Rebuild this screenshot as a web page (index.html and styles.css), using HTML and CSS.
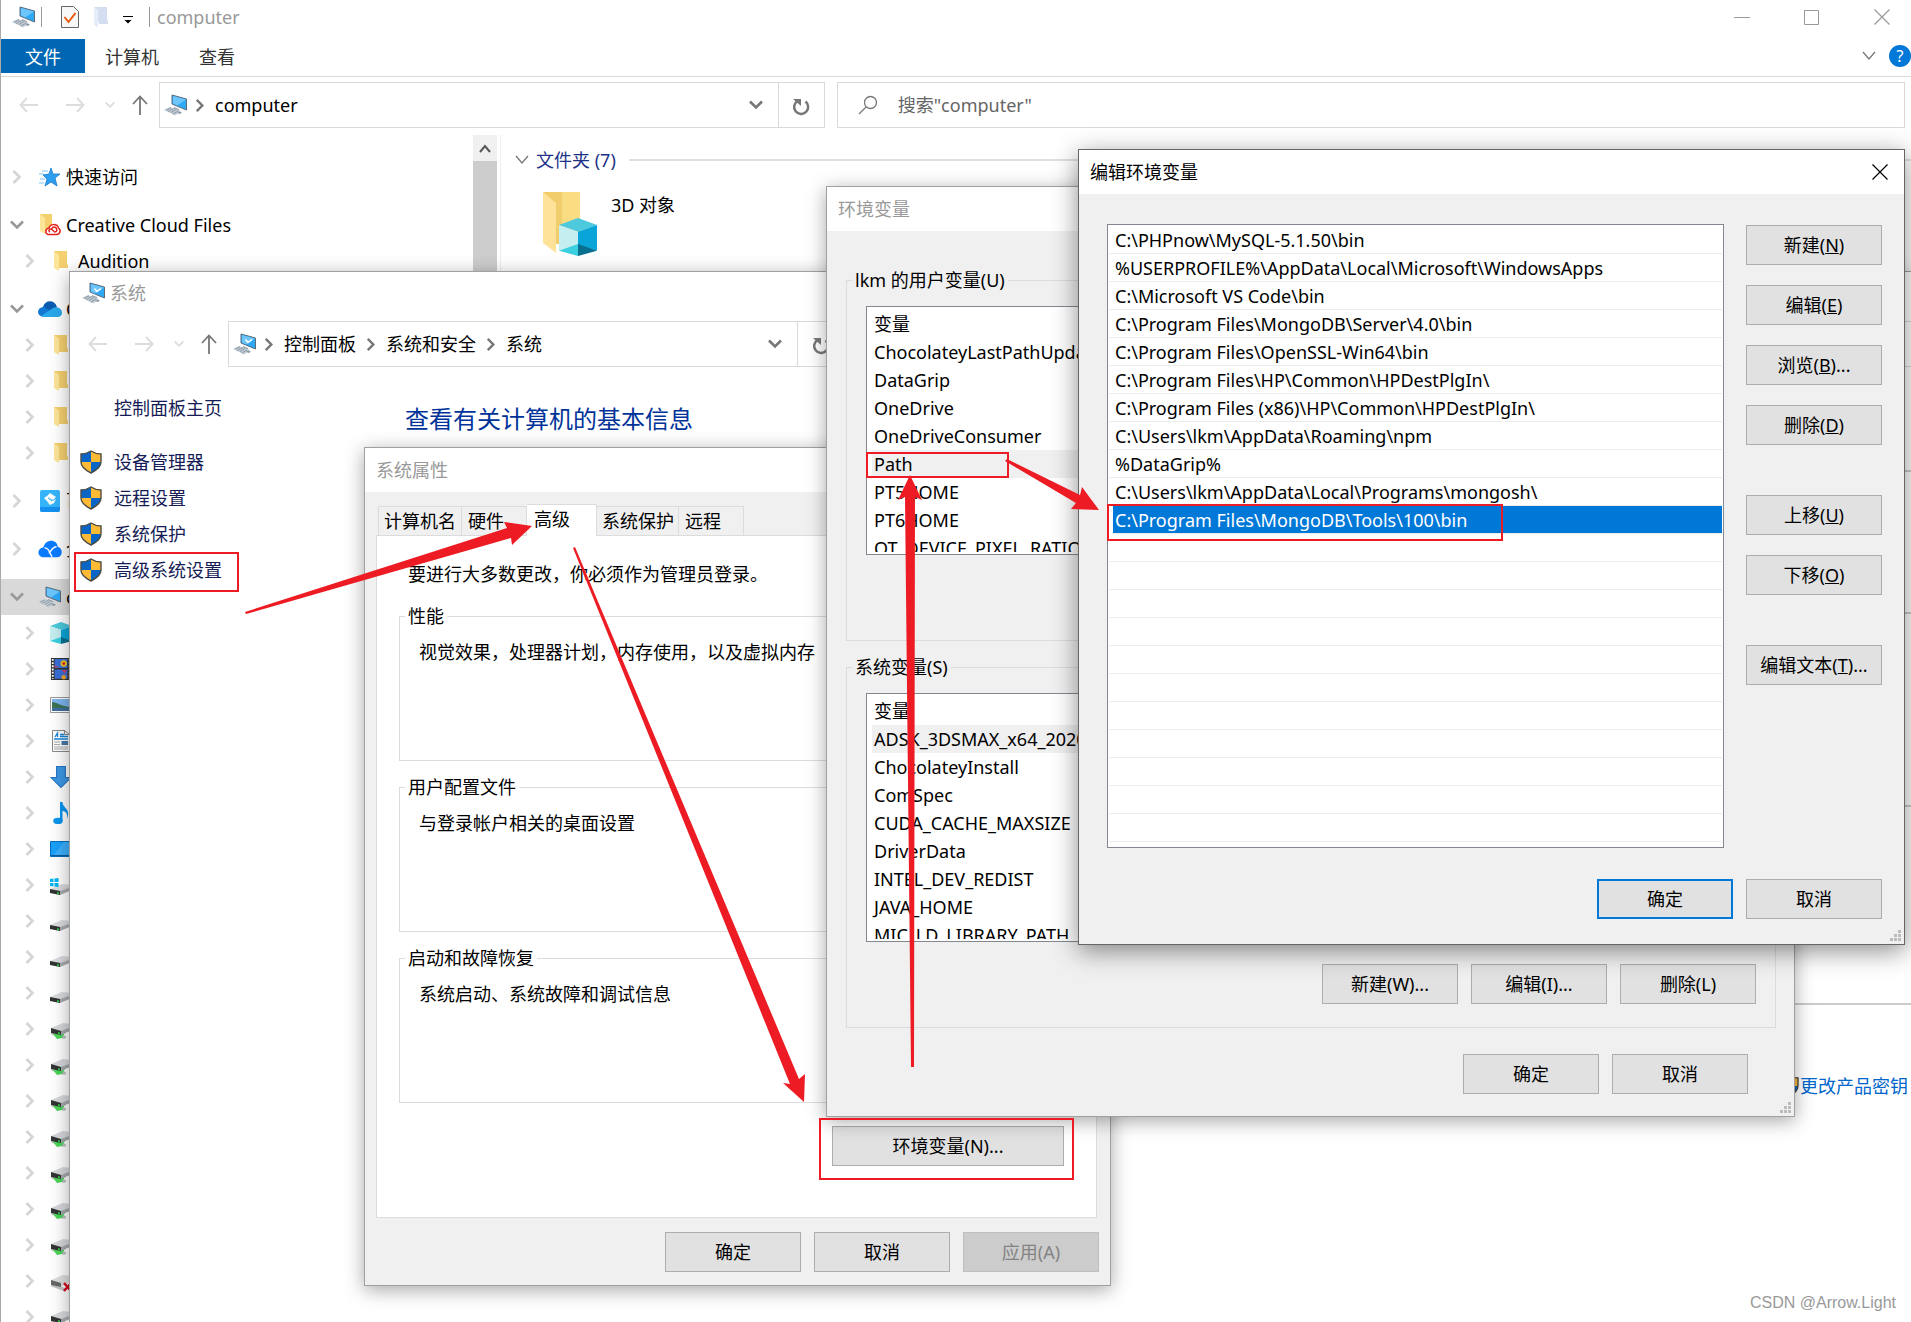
FILE: index.html
```html
<!DOCTYPE html>
<html lang="zh-CN">
<head>
    <meta charset="UTF-8">
    <meta name="viewport" content="width=device-width, initial-scale=1.0">
    <title>computer</title>
    <link rel="stylesheet" href="styles.css">
</head>
<body>
    <!-- Icons -->
    <svg class="sprite" aria-hidden="true">
        <symbol id="i-pc" viewBox="0 0 24 22">
            <path d="M8 1l14.500 4v11L8 10z" fill="#2fa8f6" stroke="#5b6b78" stroke-width="1"/>
            <path d="M9 2l13 3.500-9 6L9 9.500z" fill="#6cc6fb"/>
            <path d="M10 13l5 2v2l-5-1z" fill="#9aa5ae"/>
            <path d="M0 16l6-3 11 4-6 4.500z" fill="#c3ccd4"/>
            <path d="M2 16l5-2M4 17.500l6-3M7 18.500l5-3M9 20l5-3" stroke="#7e8d9a" stroke-width=".8"/>
            <path d="M15 17.500l3 1-2 1.500-3-1z" fill="#8f9ca8"/>
        </symbol>
        <symbol id="i-pccheck" viewBox="0 0 24 22">
            <use href="#i-pc" width="24" height="22"/>
            <path d="M12.500 6.500l2.500 3 4-3" fill="none" stroke="#fff" stroke-width="1.500"/>
        </symbol>
        <symbol id="i-folder" viewBox="0 0 16 22">
            <path d="M1 1h13v13l1 1v3H6z" fill="#f4d06f"/>
            <path d="M1 1l5 4v16l-5-3z" fill="#fde59a"/>
        </symbol>
        <symbol id="i-folderblue" viewBox="0 0 16 22">
            <path d="M1 1h13v13l1 1v3H6z" fill="#d3dff1"/>
            <path d="M1 1l4 3v18l-4-3z" fill="#e6eefa"/>
        </symbol>
        <symbol id="i-cc" viewBox="0 0 22 22">
            <path d="M1 0h12v14l-6 5z" fill="#f4d06f"/>
            <path d="M1 0l5 4v16l-5-3z" fill="#fde59a"/>
            <path d="M9 20.500c-3-1-3-6 1-6.500 1-4 8-5 9.500 0 3 2 1.500 6.500-2 6.500z" fill="#fff" stroke="#e2231a" stroke-width="1.500"/>
            <path d="M11 18c-2-1-1-3 1-3 1 0 3 3 4 3 3 0 2-5-1-5-1 0-2 1-3 2" fill="none" stroke="#e2231a" stroke-width="1.500"/>
        </symbol>
        <symbol id="i-star" viewBox="0 0 22 22">
            <path d="M12 2l2 6h7l-5 4 2 8-6-4-6 4 2-7-4-4 6-1z" fill="#2d9ff0" stroke="#1b79cc" stroke-width=".8"/>
            <path d="M3 5h6M0 8h5M1 13h5M0 17h5" stroke="#7cc4f5" stroke-width="1.200"/>
        </symbol>
        <symbol id="i-onedrive" viewBox="0 0 24 16">
            <path d="M5 6c2-7 11-8 14 0l-7 6z" fill="#0a5bb0"/>
            <path d="M4 15.500C-2 14-1 6 6 6l12 7z" fill="#1478d2"/>
            <path d="M3 15l12-8c5-2 9 1 9 5 0 2-2 4-4 4H5z" fill="#28a8ea"/>
        </symbol>
        <symbol id="i-baidu" viewBox="0 0 20 22">
            <rect width="20" height="22" rx="2" fill="#35b4fb"/>
            <path d="M0 17h20v3q0 2-2 2H2q-2 0-2-2z" fill="#1590ef"/>
            <path d="M10 3l6 4-3 3-6-4zM4 8l3-2 6 5-3 3zM7 12l3 2 3-3 3-2-2 4-4 2z" fill="#fff"/>
            <path d="M8 8l4 3" stroke="#35b4fb"/>
        </symbol>
        <symbol id="i-cloud" viewBox="0 0 22 16">
            <path d="M4 15.500c-5-1-5-8 1-9C7-2 18-1 18 6c5 1 5 9 0 9.500z" fill="#0a7bff"/>
            <path d="M6 7c5 0 4 5 7 8M17 6c-4 0-5 4-7 6" fill="none" stroke="#fff" stroke-width="1.300"/>
        </symbol>
        <symbol id="i-cube" viewBox="0 0 22 22">
            <path d="M11 0l11 4-11 4L0 4z" fill="#4cc9dc"/>
            <path d="M0 4l11 4v8L0 19z" fill="#c4eef0"/>
            <path d="M22 4l-11 4v8l11 3z" fill="#0aa5d8"/>
            <path d="M0 19l11-4v7z" fill="#3ad0df"/>
            <path d="M22 19l-11-4v7z" fill="#08708f"/>
        </symbol>
        <symbol id="i-film" viewBox="0 0 22 24">
            <rect width="22" height="24" fill="#333"/>
            <path d="M2 1v22M20.500 1v22" stroke="#fff" stroke-width="2" stroke-dasharray="2 1.500"/>
            <path d="M4 1h14v10H4zM4 12.500h14v10H4z" fill="#3a6fd8"/>
            <circle cx="14" cy="6" r="3.500" fill="#f0c52a"/>
            <circle cx="14" cy="6" r="1.500" fill="#c22"/>
            <path d="M4 8l5 2H4zM12 13h5l-2 4z" fill="#d8356a"/>
            <circle cx="14" cy="21" r="2.500" fill="#f0a52a"/>
        </symbol>
        <symbol id="i-image" viewBox="0 0 22 16">
            <path d="M.5.500h21v15H.5z" fill="#fff" stroke="#999"/>
            <path d="M2 2h18v12H2z" fill="#7db4ee"/>
            <path d="M2 5c5 0 8 4 18 5v1H2z" fill="#3d7355"/>
            <path d="M2 11h18v3H2z" fill="#3f6f9f"/>
        </symbol>
        <symbol id="i-doc" viewBox="0 0 18 22">
            <path d="M.5.500h12l5 4v17H.5z" fill="#fff" stroke="#888"/>
            <path d="M12.500.500v4h5" fill="none" stroke="#888"/>
            <path d="M3 7l2.500-4v4M8 4.500h4M8 6.500h8M2 9h14" fill="none" stroke="#1a86d9" stroke-width="1.300"/>
            <path d="M2 12h6M2 14.500h6M2 17h14M2 19h14" stroke="#aaa"/>
            <path d="M9.500 11H16v4H9.500z" fill="#4a7aa8"/>
        </symbol>
        <symbol id="i-down" viewBox="0 0 20 20">
            <path d="M6 .5h8v10h5l-9 9-9-9h5z" fill="#3d97e4" stroke="#2473c0"/>
        </symbol>
        <symbol id="i-note" viewBox="0 0 16 22">
            <ellipse cx="5" cy="19" rx="4.800" ry="3.200" fill="#0a96ee"/>
            <path d="M7 19V0h2.500c0 6 9 7 4.500 17 1-6-2-8-4.500-8v10z" fill="#0a96ee"/>
        </symbol>
        <symbol id="i-desktop" viewBox="0 0 22 16">
            <path d="M.5.500h21v15H.5z" fill="#1aa0fa" stroke="#0a6cb8"/>
            <path d="M4 14L14 1h7v13z" fill="#3cb0fc"/>
            <path d="M1 14.500h20" stroke="#0a5a9c"/>
        </symbol>
        <symbol id="i-drive" viewBox="0 0 22 20">
            <path d="M0 14l12-5 10 1v4l-12 6z" fill="#d9dbde"/>
            <path d="M10 16l12-4v3l-12 5z" fill="#a9acb0"/>
            <path d="M0 14l10 2v4L0 18z" fill="#2f3331"/>
            <path d="M7 17l2 .5v2l-2-.5z" fill="#35c04a"/>
        </symbol>
        <symbol id="i-windrive" viewBox="0 0 22 20">
            <use href="#i-drive" width="22" height="20"/>
            <path d="M0 4l3.500-.5V7H0zM4.500 3.500l4-.5v4h-4zM0 8h3.500v3.500L0 11zM4.500 8h4v4l-4-.5z" fill="#00b4f0"/>
        </symbol>
        <symbol id="i-netdrive" viewBox="0 0 22 20">
            <path d="M0 15l14 5 2-1v-2L3 14z" fill="#bfc2c5"/>
            <path d="M3 15l12-1-3 5-5 1z" fill="#4bd45a"/>
            <path d="M1 9l12-5 9 1v5l-11 6z" fill="#d5d7da"/>
            <path d="M11 12l11-4v3l-11 5z" fill="#a4a7ab"/>
            <path d="M1 9l10 3v4L1 14z" fill="#2f3331"/>
            <path d="M8 13l2 .5v2L8 15z" fill="#35c04a"/>
        </symbol>
        <symbol id="i-offdrive" viewBox="0 0 22 20">
            <path d="M0 15l14 5 2-1v-2L3 14z" fill="#bfc2c5"/>
            <path d="M1 9l12-5 9 1v5l-11 6z" fill="#dcdddf"/>
            <path d="M1 9l10 3v4L1 14z" fill="#666"/>
            <path d="M14 12l7 8M21 12l-7 8" stroke="#d4081b" stroke-width="2.500"/>
        </symbol>
        <symbol id="i-shield" viewBox="0 0 22 24">
            <path d="M11 1c3 2 6 3 10 3v8c0 6-6 9-10 11C7 21 1 18 1 12V4c4 0 7-1 10-3z" fill="#fdbb35"/>
            <path d="M11 1v11H1V4c4 0 7-1 10-3zM11 12h10c0 6-6 9-10 11z" fill="#0a66c6"/>
            <path d="M11 1c3 2 6 3 10 3v8c0 6-6 9-10 11C7 21 1 18 1 12V4c4 0 7-1 10-3z" fill="none" stroke="#4c4c44" stroke-width="1.400"/>
        </symbol>
        <symbol id="i-right" viewBox="0 0 10 14"><path d="M1.500 1l6 6-6 6" fill="none" stroke="currentColor" stroke-width="2.600"/></symbol>
        <symbol id="i-chevdown" viewBox="0 0 14 10"><path d="M1 1.500l6 6 6-6" fill="none" stroke="currentColor" stroke-width="2.600"/></symbol>
        <symbol id="i-thin" viewBox="0 0 14 10"><path d="M1 1l6 7 6-7" fill="none" stroke="currentColor" stroke-width="1.300"/></symbol>
        <symbol id="i-back" viewBox="0 0 20 16"><path d="M19 8H2M8 1L1.500 8 8 15" fill="none" stroke="currentColor" stroke-width="2"/></symbol>
        <symbol id="i-fwd" viewBox="0 0 20 16"><path d="M1 8h17M12 1l6.500 7-6.500 7" fill="none" stroke="currentColor" stroke-width="2"/></symbol>
        <symbol id="i-up" viewBox="0 0 16 20"><path d="M8 20V2M1 9l7-7.500L15 9" fill="none" stroke="currentColor" stroke-width="1.800"/></symbol>
        <symbol id="i-refresh" viewBox="0 0 18 18"><path d="M13.500 3.500a7 7 0 1 1-8-.5" fill="none" stroke="currentColor" stroke-width="2.500"/><path d="M1 1h8v7z" fill="currentColor"/></symbol>
        <symbol id="i-search" viewBox="0 0 20 20"><circle cx="12.500" cy="7.500" r="6" fill="none" stroke="currentColor" stroke-width="1.300"/><path d="M8 12l-7 7" stroke="currentColor" stroke-width="1.300"/></symbol>
        <symbol id="i-close" viewBox="0 0 16 16"><path d="M.5.500l15 15M15.500.500l-15 15" stroke="currentColor" stroke-width="1.200"/></symbol>
        <symbol id="i-grip" viewBox="0 0 12 12"><path d="M8 0h3v3H8zM4 4h3v3H4zM8 4h3v3H8zM0 8h3v3H0zM4 8h3v3H4zM8 8h3v3H8z" fill="#bcbcbc"/></symbol>
    </svg>

    <main class="explorer">
        <header class="caption">
            <svg class="ic-24"><use href="#i-pc"/></svg>
            <i class="sep"></i>
            <svg class="ic-doc" viewBox="0 0 18 22"><path d="M.5.500h12l5 5v16H.5z" fill="#f7f7f7" stroke="#666"/><path d="M3.500 11l4 5 7-9" fill="none" stroke="#e8590c" stroke-width="2"/></svg>
            <svg class="ic-16"><use href="#i-folderblue"/></svg>
            <svg class="ic-more" viewBox="0 0 10 8"><path d="M0 .5h10" stroke="#000"/><path d="M1.500 4h7L5 7.500z"/></svg>
            <i class="sep"></i>
            <span class="caption-text">computer</span>
            <div class="win-buttons">
                <button aria-label="最小化"><svg viewBox="0 0 16 16"><path d="M0 8.500h16" stroke="currentColor"/></svg></button>
                <button aria-label="最大化"><svg viewBox="0 0 16 16"><path d="M.5 1.500h14v14H.5z" fill="none" stroke="currentColor"/></svg></button>
                <button aria-label="关闭"><svg><use href="#i-close"/></svg></button>
            </div>
        </header>

        <nav class="ribbon">
            <button class="ribbon-file">文件</button>
            <button>计算机</button>
            <button>查看</button>
            <span class="ribbon-end">
                <svg class="ic-thin"><use href="#i-thin"/></svg>
                <button class="help" aria-label="帮助">?</button>
            </span>
        </nav>

        <div class="navbar">
            <div class="nav-buttons">
                <svg class="ic-arrow"><use href="#i-back"/></svg>
                <svg class="ic-arrow"><use href="#i-fwd"/></svg>
                <svg class="ic-small"><use href="#i-chevdown"/></svg>
                <svg class="ic-up"><use href="#i-up"/></svg>
            </div>
            <div class="address">
                <svg class="ic-24"><use href="#i-pc"/></svg>
                <svg class="crumb-arrow"><use href="#i-right"/></svg>
                <span>computer</span>
                <svg class="ic-drop"><use href="#i-chevdown"/></svg>
                <button class="refresh" aria-label="刷新"><svg><use href="#i-refresh"/></svg></button>
            </div>
            <label class="search">
                <svg><use href="#i-search"/></svg>
                <input type="text" aria-label="搜索" placeholder="搜索&quot;computer&quot;">
            </label>
        </div>

        <div class="explorer-body">
            <ul class="tree">
                <li class="top"><svg class="tw"><use href="#i-right"/></svg><svg class="ti"><use href="#i-star"/></svg>快速访问</li>
                <li class="top open"><svg class="tw"><use href="#i-chevdown"/></svg><svg class="ti"><use href="#i-cc"/></svg>Creative Cloud Files</li>
                <li><svg class="tw"><use href="#i-right"/></svg><svg class="ti"><use href="#i-folder"/></svg>Audition</li>
                <li class="top open"><svg class="tw"><use href="#i-chevdown"/></svg><svg class="ti"><use href="#i-onedrive"/></svg>OneDrive</li>
                <li><svg class="tw"><use href="#i-right"/></svg><svg class="ti"><use href="#i-folder"/></svg></li>
                <li><svg class="tw"><use href="#i-right"/></svg><svg class="ti"><use href="#i-folder"/></svg></li>
                <li><svg class="tw"><use href="#i-right"/></svg><svg class="ti"><use href="#i-folder"/></svg></li>
                <li><svg class="tw"><use href="#i-right"/></svg><svg class="ti"><use href="#i-folder"/></svg></li>
                <li class="top"><svg class="tw"><use href="#i-right"/></svg><svg class="ti"><use href="#i-baidu"/></svg>百度网盘</li>
                <li class="top"><svg class="tw"><use href="#i-right"/></svg><svg class="ti"><use href="#i-cloud"/></svg>企业云盘</li>
                <li class="top open current"><svg class="tw"><use href="#i-chevdown"/></svg><svg class="ti"><use href="#i-pc"/></svg>computer</li>
                <li><svg class="tw"><use href="#i-right"/></svg><svg class="ti"><use href="#i-cube"/></svg></li>
                <li><svg class="tw"><use href="#i-right"/></svg><svg class="ti"><use href="#i-film"/></svg></li>
                <li><svg class="tw"><use href="#i-right"/></svg><svg class="ti"><use href="#i-image"/></svg></li>
                <li><svg class="tw"><use href="#i-right"/></svg><svg class="ti"><use href="#i-doc"/></svg></li>
                <li><svg class="tw"><use href="#i-right"/></svg><svg class="ti"><use href="#i-down"/></svg></li>
                <li><svg class="tw"><use href="#i-right"/></svg><svg class="ti"><use href="#i-note"/></svg></li>
                <li><svg class="tw"><use href="#i-right"/></svg><svg class="ti"><use href="#i-desktop"/></svg></li>
                <li><svg class="tw"><use href="#i-right"/></svg><svg class="ti"><use href="#i-windrive"/></svg></li>
                <li><svg class="tw"><use href="#i-right"/></svg><svg class="ti"><use href="#i-drive"/></svg></li>
                <li><svg class="tw"><use href="#i-right"/></svg><svg class="ti"><use href="#i-drive"/></svg></li>
                <li><svg class="tw"><use href="#i-right"/></svg><svg class="ti"><use href="#i-drive"/></svg></li>
                <li><svg class="tw"><use href="#i-right"/></svg><svg class="ti"><use href="#i-netdrive"/></svg></li>
                <li><svg class="tw"><use href="#i-right"/></svg><svg class="ti"><use href="#i-netdrive"/></svg></li>
                <li><svg class="tw"><use href="#i-right"/></svg><svg class="ti"><use href="#i-netdrive"/></svg></li>
                <li><svg class="tw"><use href="#i-right"/></svg><svg class="ti"><use href="#i-netdrive"/></svg></li>
                <li><svg class="tw"><use href="#i-right"/></svg><svg class="ti"><use href="#i-netdrive"/></svg></li>
                <li><svg class="tw"><use href="#i-right"/></svg><svg class="ti"><use href="#i-netdrive"/></svg></li>
                <li><svg class="tw"><use href="#i-right"/></svg><svg class="ti"><use href="#i-netdrive"/></svg></li>
                <li><svg class="tw"><use href="#i-right"/></svg><svg class="ti"><use href="#i-offdrive"/></svg></li>
                <li><svg class="tw"><use href="#i-right"/></svg><svg class="ti"><use href="#i-netdrive"/></svg></li>
            </ul>
            <div class="scrollbar"><svg viewBox="0 0 24 26"><path d="M7 17l5-6 5 6" fill="none" stroke="#555" stroke-width="2"/></svg></div>
            <section class="files">
                <h2><svg class="ic-thin"><use href="#i-thin"/></svg>文件夹 (7)</h2>
                <div class="file">
                    <svg viewBox="0 0 56 64">
                        <path d="M1 0h37v52H14z" fill="#f2cd6b"/>
                        <path d="M20 0h18v40l-18 8z" fill="#fadc82"/>
                        <path d="M1 0l13 11v50L1 51z" fill="#fee29a"/>
                        <use href="#i-cube" x="17" y="26" width="38" height="38"/>
                    </svg>
                    <span>3D 对象</span>
                </div>
            </section>
        </div>
    </main>

    <section class="window system">
        <header class="sys-title"><svg class="ic-24"><use href="#i-pccheck"/></svg>系统</header>
        <div class="navbar">
            <div class="nav-buttons">
                <svg class="ic-arrow"><use href="#i-back"/></svg>
                <svg class="ic-arrow"><use href="#i-fwd"/></svg>
                <svg class="ic-small"><use href="#i-chevdown"/></svg>
                <svg class="ic-up"><use href="#i-up"/></svg>
            </div>
            <div class="address">
                <svg class="ic-24"><use href="#i-pccheck"/></svg>
                <svg class="crumb-arrow"><use href="#i-right"/></svg>
                <span>控制面板</span>
                <svg class="crumb-arrow"><use href="#i-right"/></svg>
                <span>系统和安全</span>
                <svg class="crumb-arrow"><use href="#i-right"/></svg>
                <span>系统</span>
                <svg class="ic-drop"><use href="#i-chevdown"/></svg>
                <button class="refresh" aria-label="刷新"><svg><use href="#i-refresh"/></svg></button>
            </div>
            <div class="search"></div>
        </div>
        <div class="sys-body">
            <nav class="sys-links">
                <a href="#" class="home">控制面板主页</a>
                <a href="#"><svg><use href="#i-shield"/></svg>设备管理器</a>
                <a href="#"><svg><use href="#i-shield"/></svg>远程设置</a>
                <a href="#"><svg><use href="#i-shield"/></svg>系统保护</a>
                <a href="#"><svg><use href="#i-shield"/></svg>高级系统设置</a>
            </nav>
            <div class="sys-info">
                <h1>查看有关计算机的基本信息</h1>
                <div class="block edition"></div>
                <div class="block specs"></div>
                <div class="block names"></div>
                <div class="block activation">
                    <a href="#"><svg><use href="#i-shield"/></svg>更改产品密钥</a>
                </div>
            </div>
        </div>
    </section>

    <section class="window props">
        <header class="dlg-title">系统属性</header>
        <div class="tabs">
            <button>计算机名</button>
            <button>硬件</button>
            <button class="active">高级</button>
            <button>系统保护</button>
            <button>远程</button>
        </div>
        <div class="tab-page">
            <p>要进行大多数更改，你必须作为管理员登录。</p>
            <fieldset>
                <legend>性能</legend>
                视觉效果，处理器计划，内存使用，以及虚拟内存
            </fieldset>
            <fieldset>
                <legend>用户配置文件</legend>
                与登录帐户相关的桌面设置
            </fieldset>
            <fieldset>
                <legend>启动和故障恢复</legend>
                系统启动、系统故障和调试信息
            </fieldset>
            <button class="btn env">环境变量(N)...</button>
        </div>
        <footer class="actions">
            <button class="btn">确定</button>
            <button class="btn">取消</button>
            <button class="btn" disabled>应用(A)</button>
        </footer>
    </section>

    <section class="window vars">
        <header class="dlg-title">环境变量</header>
        <div class="vars-body">
            <fieldset>
                <legend>lkm 的用户变量(U)</legend>
                <div class="var-list">
                    <div class="clip">
                        <table>
                            <thead><tr><th>变量</th></tr></thead>
                            <tbody>
                                <tr><td>ChocolateyLastPathUpdate</td></tr>
                                <tr><td>DataGrip</td></tr>
                                <tr><td>OneDrive</td></tr>
                                <tr><td>OneDriveConsumer</td></tr>
                                <tr class="selected"><td>Path</td></tr>
                                <tr><td>PT5HOME</td></tr>
                                <tr><td>PT6HOME</td></tr>
                                <tr><td>QT_DEVICE_PIXEL_RATIO</td></tr>
                            </tbody>
                        </table>
                    </div>
                </div>
            </fieldset>
            <fieldset>
                <legend>系统变量(S)</legend>
                <div class="var-list">
                    <div class="clip">
                        <table>
                            <thead><tr><th>变量</th></tr></thead>
                            <tbody>
                                <tr class="selected"><td>ADSK_3DSMAX_x64_2020</td></tr>
                                <tr><td>ChocolateyInstall</td></tr>
                                <tr><td>ComSpec</td></tr>
                                <tr><td>CUDA_CACHE_MAXSIZE</td></tr>
                                <tr><td>DriverData</td></tr>
                                <tr><td>INTEL_DEV_REDIST</td></tr>
                                <tr><td>JAVA_HOME</td></tr>
                                <tr><td>MIC_LD_LIBRARY_PATH</td></tr>
                            </tbody>
                        </table>
                    </div>
                </div>
                <div class="actions">
                    <button class="btn">新建(W)...</button>
                    <button class="btn">编辑(I)...</button>
                    <button class="btn">删除(L)</button>
                </div>
            </fieldset>
        </div>
        <footer class="actions">
            <button class="btn">确定</button>
            <button class="btn">取消</button>
        </footer>
        <svg class="grip"><use href="#i-grip"/></svg>
    </section>

    <section class="window edit">
        <header class="dlg-title">编辑环境变量<button class="close" aria-label="关闭"><svg><use href="#i-close"/></svg></button></header>
        <div class="edit-body">
            <ul class="paths">
                <li>C:\PHPnow\MySQL-5.1.50\bin</li>
                <li>%USERPROFILE%\AppData\Local\Microsoft\WindowsApps</li>
                <li>C:\Microsoft VS Code\bin</li>
                <li>C:\Program Files\MongoDB\Server\4.0\bin</li>
                <li>C:\Program Files\OpenSSL-Win64\bin</li>
                <li>C:\Program Files\HP\Common\HPDestPlgIn\</li>
                <li>C:\Program Files (x86)\HP\Common\HPDestPlgIn\</li>
                <li>C:\Users\lkm\AppData\Roaming\npm</li>
                <li>%DataGrip%</li>
                <li>C:\Users\lkm\AppData\Local\Programs\mongosh\</li>
                <li class="selected">C:\Program Files\MongoDB\Tools\100\bin</li>
                <li></li>
                <li></li>
                <li></li>
                <li></li>
                <li></li>
                <li></li>
                <li></li>
                <li></li>
                <li></li>
                <li></li>
                <li></li>
            </ul>
            <div class="side">
                <button class="btn">新建(<u>N</u>)</button>
                <button class="btn">编辑(<u>E</u>)</button>
                <button class="btn">浏览(<u>B</u>)...</button>
                <button class="btn">删除(<u>D</u>)</button>
                <button class="btn apart">上移(<u>U</u>)</button>
                <button class="btn">下移(<u>O</u>)</button>
                <button class="btn apart">编辑文本(<u>T</u>)...</button>
            </div>
        </div>
        <footer class="actions">
            <button class="btn default">确定</button>
            <button class="btn">取消</button>
        </footer>
        <svg class="grip"><use href="#i-grip"/></svg>
    </section>

    <!-- Red marks over the windows -->
    <svg class="marks" aria-hidden="true">
        <g fill="none" stroke="#ed1c24" stroke-width="2">
            <rect x="75" y="553" width="163" height="38"/>
            <rect x="867" y="453" width="141" height="24"/>
            <rect x="1108" y="505" width="394" height="35"/>
            <rect x="820" y="1119" width="253" height="60"/>
        </g>
        <g fill="#ed1c24">
            <path d="M245 612L507 528 504 522 532 526 512 545 511 538 246 614z"/>
            <path d="M573 548L790 1084 783 1083 804 1102 805 1074 799 1079 575 547z"/>
            <path d="M911 1067L905 497 898 500 910 475 922 500 915 497 914 1067z"/>
            <path d="M1005 461L1076 503 1071 509 1099 510 1082 487 1080 495 1007 459z"/>
        </g>
    </svg>
    <div class="watermark">CSDN @Arrow.Light</div>
</body>
</html>
```

FILE: styles.css
```css
* {
    box-sizing: border-box;
}
body {
    margin: 0;
    height: 100vh;
    overflow: hidden;
    position: relative;
    background-color: #fff;
    color: #000;
    font-family: "Noto Sans", "Noto Sans CJK SC", sans-serif;
    font-size: 18px;
    line-height: 26px;
}
button, input {
    font: inherit;
    color: inherit;
}
button {
    border: none;
    background: none;
    padding: 0;
}
a {
    text-decoration: none;
}
h1, h2, p, ul {
    margin: 0;
    padding: 0;
    font-weight: normal;
}
ul {
    list-style: none;
}
svg {
    flex: none;
}
.sprite {
    position: absolute;
    width: 0;
    height: 0;
}
.ic-24 {
    width: 24px;
    height: 22px;
}
.ic-thin {
    width: 14px;
    height: 10px;
    color: #777;
}

/* Explorer */
.explorer {
    height: 100%;
    display: flex;
    flex-direction: column;
    border-left: 1px solid #aaa;
}
.caption {
    display: flex;
    align-items: center;
    height: 39px;
    padding: 0 21px 6px 11px;
    color: #999;
}
.sep {
    width: 1px;
    height: 20px;
    margin-left: 5px;
    background-color: #999;
}
.ic-doc {
    width: 18px;
    height: 22px;
    margin-left: 19px;
}
.ic-16 {
    width: 16px;
    height: 22px;
    margin-left: 14px;
}
.ic-more {
    width: 10px;
    height: 8px;
    margin: 6px 11px 0 14px;
}
.caption-text {
    margin-left: 7px;
}
.win-buttons {
    display: flex;
    gap: 54px;
    margin-left: auto;
}
.win-buttons button, .win-buttons svg {
    display: block;
    width: 16px;
    height: 16px;
}
.ribbon {
    display: flex;
    height: 38px;
    padding-bottom: 3px;
    border-bottom: 1px solid #d9d9d9;
    color: #333;
}
.ribbon button {
    padding: 2px 20px 0;
}
.ribbon .ribbon-file {
    width: 84px;
    background-color: #0067b4;
    color: #fff;
}
.ribbon-end {
    display: flex;
    align-items: center;
    gap: 13px;
    margin-left: auto;
}
.ribbon .help {
    width: 22px;
    height: 22px;
    padding: 0;
    border-radius: 50%;
    background-color: #0078d7;
    color: #fff;
    font-size: 16px;
    line-height: 22px;
}
.navbar {
    display: flex;
    height: 46px;
    margin: 5px 6px 7px 0;
}
.nav-buttons {
    display: flex;
    align-items: center;
    width: 158px;
    padding-left: 18px;
    color: #ddd;
}
.ic-arrow {
    width: 20px;
    height: 16px;
    margin-right: 26px;
}
.ic-small {
    width: 10px;
    height: 8px;
    margin-left: -6px;
}
.ic-up {
    width: 16px;
    height: 20px;
    margin-left: 17px;
    color: #777;
}
.address, .search {
    display: flex;
    align-items: center;
    border: 1px solid #d9d9d9;
}
.address {
    flex: 671 1 0;
    padding-left: 4px;
    white-space: nowrap;
}
.address .ic-24 {
    margin-right: -3px;
}
.crumb-arrow {
    width: 10px;
    height: 13px;
    margin: 0 10px;
    color: #777;
}
.ic-drop {
    width: 14px;
    height: 10px;
    margin-left: auto;
    margin-right: 15px;
    color: #777;
}
.refresh {
    width: 46px;
    height: 100%;
    border-left: 1px solid #d9d9d9;
    color: #777;
}
.refresh svg {
    width: 18px;
    height: 18px;
    vertical-align: middle;
}
.search {
    flex: 1064 1 0;
    margin-left: 12px;
    padding-left: 20px;
    color: #777;
}
.search svg {
    width: 20px;
    height: 20px;
    margin-right: 20px;
}
.search input {
    flex: 1;
    border: none;
    padding: 0;
    background: none;
    outline: none;
}
.search input::placeholder {
    color: #666;
}
.explorer-body {
    flex: 1;
    display: flex;
    min-height: 0;
}
.tree {
    width: 472px;
    padding-top: 12px;
    overflow: hidden;
}
.tree li {
    display: flex;
    align-items: center;
    height: 36px;
    padding-left: 24px;
}
.tree .top {
    margin-top: 12px;
    padding-left: 10px;
}
.tree .current {
    background-color: #d9d9d9;
}
.tw {
    width: 10px;
    height: 14px;
    margin-right: 15px;
    color: #d5d5d5;
}
.top .tw {
    margin-left: 1px;
}
.open .tw {
    width: 14px;
    height: 10px;
    margin-left: -1px;
    color: #999;
}
.ti {
    width: 22px;
    height: 22px;
    margin-right: 6px;
}
.top .ti {
    width: 24px;
    margin: 0 4px 0 1px;
}
.open .ti {
    margin-left: -1px;
}
.scrollbar {
    width: 24px;
    background-color: #cdcdcd;
}
.scrollbar svg {
    display: block;
    height: 26px;
    background-color: #f0f0f0;
}
.files {
    flex: 1;
    margin-left: 3px;
    padding: 12px 0 0 14px;
    border-left: 1px solid #eee;
}
.files h2 {
    display: flex;
    align-items: center;
    gap: 7px;
    font-size: 18px;
    color: #1e3287;
}
.files h2::after {
    content: "";
    flex: 1;
    height: 2px;
    margin-left: 6px;
    background-color: #e0e0e0;
}
.file {
    display: flex;
    gap: 13px;
    padding: 19px 0 0 27px;
}
.file svg {
    width: 56px;
    height: 64px;
}

/* Windows */
.window {
    position: absolute;
    border: 1px solid #a0a0a0;
    background-color: #f0f0f0;
    box-shadow: 0 4px 18px rgba(0, 0, 0, 0.35);
}
.dlg-title {
    display: flex;
    align-items: center;
    height: 44px;
    padding: 0 16px 0 11px;
    background-color: #fff;
    color: #999;
}
.btn {
    width: 136px;
    height: 40px;
    border: 1px solid #adadad;
    background-color: #e1e1e1;
    color: #000;
}
.btn:disabled {
    border-color: #bfbfbf;
    background-color: #ccc;
    color: #838383;
}
.btn.default {
    border: 2px solid #0078d7;
}
.actions {
    display: flex;
    justify-content: flex-end;
    gap: 13px;
}
fieldset {
    margin: 0;
    min-width: 0;
    border: 1px solid #dcdcdc;
}
legend {
    margin-left: -14px;
    padding: 0 3px;
}
.grip {
    position: absolute;
    right: 2px;
    bottom: 2px;
    width: 12px;
    height: 12px;
}

/* Control panel: system */
.system {
    top: 271px;
    left: 69px;
    right: 0;
    bottom: 0;
    border-right: none;
    border-bottom: none;
    background-color: #fff;
    overflow: hidden;
}
.sys-title {
    display: flex;
    align-items: center;
    gap: 4px;
    height: 44px;
    padding: 0 0 2px 12px;
    color: #999;
}
.system .navbar {
    margin-right: -90px;
}
.system .address {
    flex: none;
    width: 616px;
}
.sys-body {
    display: flex;
}
.sys-links {
    width: 335px;
    padding: 16px 0 0 10px;
}
.sys-links a {
    display: flex;
    align-items: center;
    gap: 12px;
    height: 36px;
    color: #151c55;
}
.sys-links .home {
    margin-bottom: 18px;
    padding-left: 34px;
}
.sys-links svg, .activation svg {
    width: 22px;
    height: 24px;
}
.sys-info {
    flex: 1;
}
.sys-info h1 {
    padding: 27px 0 33px;
    font-size: 24px;
    line-height: 36px;
    color: #003399;
}
.block {
    border-top: 2px solid #ccc;
}
.edition {
    height: 142px;
}
.specs {
    height: 193px;
}
.names {
    height: 198px;
}
.activation {
    padding: 68px 3px 0 0;
}
.activation a {
    display: flex;
    align-items: center;
    justify-content: flex-end;
    gap: 1px;
    color: #0066cc;
}

/* System properties */
.props {
    top: 447px;
    left: 364px;
    width: 747px;
}
.tabs {
    display: flex;
    align-items: flex-end;
    padding: 12px 13px 0;
}
.tabs button {
    height: 29px;
    padding: 0 22px 0 6px;
    border: 1px solid #dcdcdc;
    border-left: none;
    border-bottom: none;
    background-color: #f0f0f0;
}
.tabs button:first-child {
    padding: 0 5px;
    border-left: 1px solid #dcdcdc;
}
.tabs button:nth-child(4) {
    padding: 0 4px 0 5px;
}
.tabs .active {
    position: relative;
    height: 32px;
    margin-bottom: -1px;
    padding: 0 26px 4px 7px;
    background-color: #fff;
}
.tab-page {
    margin: 0 13px 0 11px;
    padding: 25px 22px 51px;
    border: 1px solid #dcdcdc;
    background-color: #fff;
}
.tab-page p {
    margin: 0 9px 16px;
}
.tab-page fieldset {
    height: 158px;
    margin-bottom: 13px;
    padding: 10px 19px;
}
.env {
    display: block;
    width: 232px;
    margin: 23px 10px 0 auto;
}
.props .actions {
    padding: 14px 11px 13px;
}

/* Environment variables */
.vars {
    top: 186px;
    left: 826px;
    width: 969px;
}
.vars-body {
    display: grid;
    gap: 13px;
    padding: 36px 18px 26px 19px;
}
.vars fieldset {
    height: 374px;
    padding: 13px 19px 0;
}
.var-list {
    height: 249px;
    margin-bottom: 22px;
    border: 1px solid #828790;
    background-color: #fff;
}
.clip {
    height: 245px;
    padding-left: 5px;
    overflow: hidden;
}
.clip table {
    width: 100%;
    border-collapse: collapse;
}
.clip th, .clip td {
    height: 28px;
    padding: 0 2px;
    text-align: left;
    font-weight: normal;
}
.clip th {
    height: 31px;
    padding-top: 3px;
}
.clip .selected {
    background-color: #f0f0f0;
}
.vars > .actions {
    padding: 0 46px 22px 0;
}

/* Edit environment variable */
.edit {
    top: 149px;
    left: 1078px;
    width: 827px;
    border-color: #666;
    box-shadow: 0 6px 24px rgba(0, 0, 0, 0.45);
}
.edit .dlg-title {
    color: #000;
}
.close {
    margin-left: auto;
}
.close svg {
    display: block;
    width: 16px;
    height: 16px;
}
.edit-body {
    display: flex;
    gap: 22px;
    padding: 30px 22px 31px 28px;
}
.paths {
    flex: 1;
    height: 624px;
    padding: 1px 1px 0;
    border: 1px solid #828790;
    background-color: #fff;
}
.paths li {
    height: 28px;
    padding-left: 6px;
    border-bottom: 1px solid #ececec;
    line-height: 28px;
}
.paths .selected {
    margin-left: 4px;
    padding-left: 2px;
    background-color: #0078d7;
    color: #fff;
}
.side {
    display: flex;
    flex-direction: column;
    gap: 20px;
    padding-top: 1px;
}
.side .apart {
    margin-top: 30px;
}
.edit .actions {
    padding: 0 22px 25px 0;
}

.marks {
    position: absolute;
    top: 0;
    left: 0;
    width: 100%;
    height: 100%;
    pointer-events: none;
}
.watermark {
    position: absolute;
    right: 15px;
    bottom: 6px;
    color: #999;
    font-family: "Liberation Sans", sans-serif;
    font-size: 16px;
}
```
